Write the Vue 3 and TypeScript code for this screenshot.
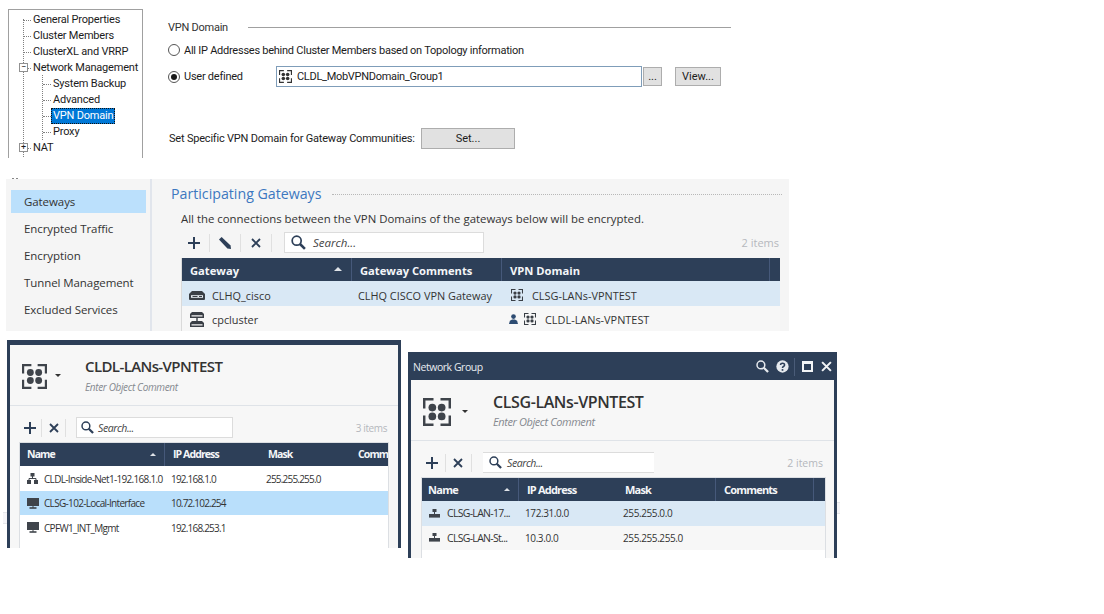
<script setup lang="ts">
interface TreeItem { label: string; level: number; selected?: boolean; expander?: string }
const tree: TreeItem[] = [
  { label: 'General Properties', level: 0 },
  { label: 'Cluster Members', level: 0 },
  { label: 'ClusterXL and VRRP', level: 0 },
  { label: 'Network Management', level: 0, expander: 'minus' },
  { label: 'System Backup', level: 1 },
  { label: 'Advanced', level: 1 },
  { label: 'VPN Domain', level: 1, selected: true },
  { label: 'Proxy', level: 1 },
  { label: 'NAT', level: 0, expander: 'plus' },
]
const nav = ['Gateways', 'Encrypted Traffic', 'Encryption', 'Tunnel Management', 'Excluded Services']

interface Row { icon: string; name: string; ip: string; mask: string; cls?: string }
interface Win {
  id: string; title: string; bar?: string; items: string; heads: string[]
  rows: Row[]
}
const windows: Win[] = [
  {
    id: 'win-a', title: 'CLDL-LANs-VPNTEST', items: '3 items', heads: ['IP Address', 'Mask', 'Comm'],
    rows: [
      { icon: 'i-net', name: 'CLDL-Inside-Net1-192.168.1.0', ip: '192.168.1.0', mask: '255.255.255.0' },
      { icon: 'i-host', name: 'CLSG-102-Local-Interface', ip: '10.72.102.254', mask: '', cls: 'sel-strong' },
      { icon: 'i-host', name: 'CPFW1_INT_Mgmt', ip: '192.168.253.1', mask: '' },
    ],
  },
  {
    id: 'win-b', title: 'CLSG-LANs-VPNTEST', bar: 'Network Group', items: '2 items', heads: ['IP Address', 'Mask', 'Comments'],
    rows: [
      { icon: 'i-lan', name: 'CLSG-LAN-17...', ip: '172.31.0.0', mask: '255.255.0.0', cls: 'sel-soft' },
      { icon: 'i-lan', name: 'CLSG-LAN-St...', ip: '10.3.0.0', mask: '255.255.255.0', cls: 'alt' },
    ],
  },
]
</script>

<template>
  <div class="page">
    <svg class="defs" width="0" height="0" aria-hidden="true">
      <symbol id="i-group" viewBox="0 0 24 24">
        <path d="M1 9V1h8M15 1h8v8M1 15v8h8M15 23h8v-8" fill="none" stroke="currentColor" stroke-width="2.2" />
        <circle cx="8" cy="8.2" r="3.3" fill="currentColor" /><circle cx="16" cy="8.2" r="3.3" fill="currentColor" />
        <circle cx="8" cy="15.8" r="3.3" fill="currentColor" /><circle cx="16" cy="15.8" r="3.3" fill="currentColor" />
      </symbol>
      <symbol id="i-plus" viewBox="0 0 12 12"><path d="M6 0v12M0 6h12" stroke="currentColor" stroke-width="2" fill="none" /></symbol>
      <symbol id="i-x" viewBox="0 0 12 12"><path d="M1.2 1.2l9.6 9.6M10.8 1.2l-9.6 9.6" stroke="currentColor" stroke-width="2.2" fill="none" /></symbol>
      <symbol id="i-pencil" viewBox="0 0 12 12"><path d="M0 2.6L2.6 0l9 8.4.4 3.6-3.6-.4z" fill="currentColor" /></symbol>
      <symbol id="i-search" viewBox="0 0 14 14">
        <circle cx="5.3" cy="5.3" r="4.2" fill="none" stroke="currentColor" stroke-width="1.6" />
        <path d="M8.4 8.4l4.6 4.6" stroke="currentColor" stroke-width="2.4" fill="none" />
      </symbol>
      <symbol id="i-router" viewBox="0 0 16 9">
        <path d="M3 0h10l3 3v5a1 1 0 0 1-1 1H1a1 1 0 0 1-1-1V3z" fill="currentColor" />
        <path d="M2 4.2h12v2.6H2z" fill="#e8eef4" />
        <path d="M3.5 5.5h5M10 5.5h3" stroke="currentColor" stroke-width="1" />
      </symbol>
      <symbol id="i-cluster" viewBox="0 0 14 15">
        <path d="M2 0h10l2 2v4H0V2z" fill="currentColor" />
        <path d="M2 9h10l2 2v4H0v-4z" fill="currentColor" />
        <path d="M7 6v3" stroke="currentColor" stroke-width="1.4" />
        <path d="M1.5 3.2h11v1.4h-11zM1.5 12.2h11v1.4h-11z" fill="#f5f5f5" />
      </symbol>
      <symbol id="i-user" viewBox="0 0 10 11">
        <circle cx="5" cy="2.8" r="2.6" fill="currentColor" /><path d="M0 11l1-3.6L3.5 6h3L9 7.4l1 3.6z" fill="currentColor" />
      </symbol>
      <symbol id="i-net" viewBox="0 0 11 11">
        <rect x="3.5" y="0" width="4" height="3.5" fill="currentColor" />
        <rect x="0" y="7" width="4" height="4" fill="currentColor" /><rect x="7" y="7" width="4" height="4" fill="currentColor" />
        <path d="M5.5 3v2.5M2 7V5.5h7V7" stroke="currentColor" fill="none" />
      </symbol>
      <symbol id="i-host" viewBox="0 0 12 11">
        <rect x="0" y="0" width="12" height="8" fill="currentColor" />
        <path d="M2.5 10h7" stroke="currentColor" stroke-width="1.6" /><path d="M6 8v2" stroke="currentColor" />
      </symbol>
      <symbol id="i-lan" viewBox="0 0 11 9">
        <rect x="3.5" y="0" width="4" height="3" fill="currentColor" />
        <path d="M5.5 3v2" stroke="currentColor" />
        <rect x="0" y="5" width="11" height="3.6" fill="currentColor" />
      </symbol>
      <symbol id="i-help" viewBox="0 0 14 14">
        <circle cx="7" cy="7" r="6.6" fill="currentColor" />
        <path d="M4.8 5.4C5 3 9.2 3 9.2 5.3c0 1.7-2.2 1.6-2.2 3.4" fill="none" stroke="#2d3f58" stroke-width="1.7" />
        <rect x="6.1" y="9.8" width="1.8" height="1.8" fill="#2d3f58" />
      </symbol>
    </svg>

    <!-- Tree pane -->
    <nav class="tree">
      <div class="tree-stem"></div>
      <div class="tree-substem"></div>
      <div v-for="item in tree" :key="item.label" class="tree-row" :class="'lvl' + item.level">
        <span v-if="item.expander" class="expander">{{ item.expander === 'plus' ? '+' : '−' }}</span>
        <span class="tree-dots"></span>
        <span class="tree-label" :class="{ selected: item.selected }">{{ item.label }}</span>
      </div>
    </nav>

    <!-- VPN domain form -->
    <section class="form">
      <div class="legend"><span class="legend-text">VPN Domain</span><i></i></div>
      <label class="radio-row first"><span class="radio"></span>All IP Addresses behind Cluster Members based on Topology information</label>
      <div class="radio-row second">
        <span class="radio on"></span><span class="user-label">User defined</span>
        <div class="field">
          <svg class="field-icon"><use href="#i-group" /></svg>
          <span>CLDL_MobVPNDomain_Group1</span>
        </div>
        <button class="btn dots">...</button>
        <button class="btn view">View...</button>
      </div>
      <div class="set-row">
        <span class="set-text">Set Specific VPN Domain for Gateway Communities:</span>
        <button class="btn set">Set...</button>
      </div>
    </section>

    <!-- Participating gateways -->
    <svg class="chev" width="7" height="3" viewBox="0 0 7 3"><path d="M1 0v2M5 0v2" stroke="#555" stroke-width="1.4" /></svg>
    <section class="gateways">
      <aside class="side">
        <div v-for="(n, i) in nav" :key="n" class="side-item" :class="{ active: i === 0 }">{{ n }}</div>
      </aside>
      <div class="gw-main">
        <div class="gw-title"><h2>Participating Gateways</h2><i></i></div>
        <p class="gw-desc">All the connections between the VPN Domains of the gateways below will be encrypted.</p>
        <div class="toolbar gw-tools">
          <svg class="tool t-first"><use href="#i-plus" /></svg><span class="sep"></span>
          <svg class="tool"><use href="#i-pencil" /></svg><span class="sep"></span>
          <svg class="tool t-x"><use href="#i-x" /></svg><span class="sep"></span>
          <div class="search gw-search"><svg class="mag"><use href="#i-search" /></svg><em>Search...</em></div>
          <span class="count">2 items</span>
        </div>
        <div class="gw-table">
          <div class="gw-row gw-head">
            <div class="cell c1">Gateway<span class="caret"></span></div>
            <div class="cell c2">Gateway Comments</div>
            <div class="cell c3">VPN Domain</div>
            <div class="cell c4"></div>
          </div>
          <div class="gw-row gw-sel">
            <div class="cell c1"><svg class="ic-router"><use href="#i-router" /></svg>CLHQ_cisco</div>
            <div class="cell c2 tight">CLHQ CISCO VPN Gateway</div>
            <div class="cell c3"><svg class="ic-group"><use href="#i-group" /></svg>CLSG-LANs-VPNTEST</div>
          </div>
          <div class="gw-row gw-plain">
            <div class="cell c1"><svg class="ic-cluster"><use href="#i-cluster" /></svg>cpcluster</div>
            <div class="cell c2"></div>
            <div class="cell c3"><svg class="ic-user"><use href="#i-user" /></svg><svg class="ic-group"><use href="#i-group" /></svg>CLDL-LANs-VPNTEST</div>
          </div>
        </div>
      </div>
    </section>

    <!-- Slivers of the window behind the pasted dialogs -->
    <span class="ghost ghost-l"></span>
    <span class="ghost ghost-r"></span>

    <!-- Object windows -->
    <section v-for="w in windows" :key="w.id" class="win" :class="w.id">
      <header v-if="w.bar" class="win-bar">
        <span>{{ w.bar }}</span>
        <div class="win-ctrls">
          <svg class="wc"><use href="#i-search" /></svg>
          <svg class="wc"><use href="#i-help" /></svg>
          <i class="wc-sep"></i>
          <span class="wc-max"></span>
          <svg class="wc-x"><use href="#i-x" /></svg>
        </div>
      </header>
      <div class="win-body">
        <div class="obj-head">
          <svg class="obj-icon"><use href="#i-group" /></svg>
          <span class="obj-caret"></span>
          <div class="obj-text">
            <h3>{{ w.title }}</h3>
            <em>Enter Object Comment</em>
          </div>
        </div>
        <div class="win-content">
          <div class="toolbar win-tools">
            <svg class="tool"><use href="#i-plus" /></svg><span class="sep"></span>
            <svg class="tool t-x"><use href="#i-x" /></svg><span class="sep"></span>
            <div class="search win-search"><svg class="mag"><use href="#i-search" /></svg><em>Search...</em></div>
            <span class="count">{{ w.items }}</span>
          </div>
          <div class="win-table">
            <div class="win-row win-head">
              <div class="wcell w1">Name<span class="caret"></span></div>
              <div v-for="h in w.heads" :key="h" class="wcell">{{ h }}</div>
            </div>
            <div v-for="r in w.rows" :key="r.name" class="win-row" :class="r.cls">
              <div class="wcell w1"><svg class="row-ic" :class="r.icon"><use :href="'#' + r.icon" /></svg><span>{{ r.name }}</span></div>
              <div class="wcell data">{{ r.ip }}</div>
              <div class="wcell data">{{ r.mask }}</div>
              <div class="wcell"></div>
            </div>
          </div>
        </div>
      </div>
    </section>
  </div>
</template>

<style>
html, body { margin: 0; background: #fff; }
</style>

<style scoped>
.page { position: relative; width: 1104px; height: 614px; overflow: hidden; background: #fff; font-family: "Roboto", "Liberation Sans", sans-serif; color: #1c1c1c; }
.defs { position: absolute; }
h2, h3, p { margin: 0; font-weight: normal; }
button { font-family: inherit; color: #1c1c1c; padding: 0; cursor: default; }

/* tree */
.tree { position: absolute; left: 8px; top: 9px; width: 133px; height: 146px; border: 1px solid #a0a0a0; border-bottom: 0; padding-top: 2px; font-size: 11px; letter-spacing: -0.2px; }
.tree-stem { position: absolute; left: 14px; top: 9px; height: 138px; border-left: 1px dotted #808080; }
.tree-substem { position: absolute; left: 33px; top: 65px; height: 65px; border-left: 1px dotted #808080; }
.tree-row { position: relative; height: 16px; display: flex; align-items: center; }
.lvl0 { padding-left: 14px; }
.lvl1 { padding-left: 34px; }
.tree-dots { width: 8px; border-top: 1px dotted #808080; flex: none; }
.tree-label { padding: 0 1px; line-height: 14px; white-space: nowrap; border: 1px solid transparent; }
.selected { background: #0078d7; color: #fff; border: 1px dotted #111; }
.expander { position: absolute; left: 10px; top: 3px; width: 7px; height: 7px; border: 1px solid #919191; background: #fff; font-size: 9px; line-height: 7px; text-align: center; letter-spacing: 0; z-index: 1; }

/* form */
.form { position: absolute; left: 168px; top: 18px; width: 570px; font-size: 11px; letter-spacing: -0.25px; }
.legend { display: flex; align-items: center; height: 18px; color: #333; }
.legend-text { width: 80px; flex: none; }
.legend i { width: 483px; border-top: 1px solid #a0a0a0; }
.radio-row { display: flex; align-items: center; }
.first { margin-top: 5px; height: 18px; }
.second { margin-top: 7px; height: 21px; }
.radio { width: 10px; height: 10px; border: 1px solid #555; border-radius: 50%; background: #fff; margin-right: 4px; flex: none; position: relative; }
.radio.on::after { content: ""; position: absolute; inset: 2px; border-radius: 50%; background: #1a1a1a; }
.user-label { width: 92px; flex: none; }
.field { width: 364px; height: 19px; border: 1px solid #7f9db9; display: flex; align-items: center; flex: none; letter-spacing: -0.3px; }
.field-icon { width: 13px; height: 13px; margin: 0 5px 0 2px; color: #333; }
.btn { background: #e1e1e1; border: 1px solid #adadad; box-sizing: border-box; font-size: 11px; }
.dots { width: 19px; height: 19px; margin-left: 1px; }
.view { width: 46px; height: 19px; margin-left: 13px; }
.set-row { margin-top: 41px; display: flex; align-items: center; height: 21px; padding-left: 1px; }
.set-text { width: 246px; flex: none; white-space: nowrap; letter-spacing: -0.2px; }
.set { width: 94px; height: 21px; margin-left: 6px; }

/* gateways */
.chev { position: absolute; left: 12px; top: 178px; }
.gateways { position: absolute; left: 6px; top: 179px; width: 783px; height: 152px; background: #f5f5f5; display: flex; font-family: "Open Sans", sans-serif; overflow: hidden; }
.side { width: 146px; flex: none; border-right: 2px solid #e1e5ec; padding: 11px 0 0 5px; box-sizing: border-box; }
.side-item { width: 122px; height: 23px; line-height: 23px; padding-left: 13px; margin-bottom: 4px; font-size: 11.5px; letter-spacing: -0.08px; color: #333; white-space: nowrap; }
.side-item.active { background: #bbe0fc; }
.gw-main { flex: 1; padding-left: 19px; min-width: 0; }
.gw-title { display: flex; align-items: center; height: 20px; margin-top: 4px; }
.gw-title h2 { font-size: 14.2px; color: #3d78c0; white-space: nowrap; }
.gw-title i { margin-left: 10px; width: 450px; border-top: 1px dotted #b8b8b8; margin-top: 2px; }
.gw-desc { font-size: 11.4px; color: #333; margin: 8px 0 0 10px; line-height: 16px; white-space: nowrap; }
.toolbar { display: flex; align-items: center; }
.tool { width: 12px; height: 12px; color: #2d3f58; flex: none; }
.sep { width: 1px; height: 18px; background: #e0e0e0; flex: none; }
.gw-tools { margin: 5px 0 0 17px; height: 21px; width: 591px; }
.gw-tools .sep { margin: 0 9px 0 9px; }
.t-x { width: 10px; height: 10px; margin: 0 1px; }
.search { background: #fff; display: flex; align-items: center; box-sizing: border-box; }
.search em { font-size: 11.5px; color: #444; }
.mag { width: 14px; height: 14px; color: #2d3f58; margin: 0 4px 0 5px; flex: none; }
.gw-search { width: 200px; height: 21px; border: 1px solid #dcdcdc; margin-left: 3px; }
.gw-search .mag { width: 15px; height: 15px; margin: 0 7px 0 6px; }
.count { margin-left: auto; color: #b5b8bd; font-size: 11px; }
.gw-table { margin: 5px 0 0 10px; width: 598px; border-left: 1px solid #dadada; }
.gw-row { display: flex; height: 25px; background: #f7f7f7; }
.gw-head { height: 23px; background: #2d3f58; color: #fff; font-weight: 700; }
.gw-sel { background: #d9e8f5; }
.gw-sel .cell { padding-top: 3px; }
.gw-plain .cell { padding-top: 1px; }
.cell { display: flex; align-items: center; font-size: 10.9px; color: #333; white-space: nowrap; box-sizing: border-box; flex: none; position: relative; }
.gw-head .cell { color: #f4f6f8; border-right: 1px solid #46597a; font-size: 11.2px; padding-top: 1px; }
.c1 { width: 170px; padding-left: 8px; }
.c2 { width: 150px; padding-left: 8px; }
.c3 { width: 268px; padding-left: 8px; }
.c4 { flex: 1; border-right: 0 !important; }
.tight { padding-left: 6px; }
.caret { position: absolute; width: 0; height: 0; border: 4px solid transparent; border-top: 0; border-bottom: 4px solid #dfe3e8; }
.c1 .caret { right: 9px; top: 9px; }
.ic-router { width: 16px; height: 9px; margin: 0 7px 0 -1px; color: #3a3f46; }
.ic-cluster { width: 14px; height: 15px; margin: 0 8px 0 0; color: #3a3f46; }
.ic-group { width: 12px; height: 12px; margin: 0 9px 0 1px; color: #3a3f46; }
.ic-user { width: 9px; height: 10px; margin: 0 5px 0 -1px; color: #2d4c72; }

/* slivers */
.ghost { position: absolute; background: #f5f5f8; border: solid #e4e6ea; border-width: 1px 0; box-sizing: border-box; }
.ghost-l { left: 3px; top: 512px; width: 4px; height: 12px; }
.ghost-r { left: 837px; top: 502px; width: 3px; height: 12px; }

/* windows */
.win { position: absolute; background: #2d3f58; padding: 0 3px; box-sizing: border-box; font-family: "Open Sans", sans-serif; overflow: hidden; }
.win-a { left: 7px; top: 340px; width: 394px; height: 208px; padding-top: 5px; }
.win-b { left: 408px; top: 352px; width: 429px; height: 206px; }
.win-bar { height: 28px; color: #e8ecf0; font-size: 10.5px; letter-spacing: -0.45px; display: flex; align-items: center; padding: 1px 2px 0; box-sizing: border-box; }
.win-ctrls { margin-left: auto; display: flex; align-items: center; color: #e6eaee; }
.wc { width: 13px; height: 13px; margin-right: 7px; }
.wc-sep { width: 1px; height: 18px; background: #4a5c78; margin: 0 7px 0 -2px; }
.wc-max { width: 7px; height: 6px; border: 2px solid #f2f4f6; border-top-width: 3px; margin-right: 8px; box-sizing: content-box; }
.wc-x { width: 11px; height: 11px; color: #f2f4f6; }
.win-body { background: #f7f7f7; height: 100%; }
.obj-head { display: flex; align-items: flex-start; border-bottom: 1px solid #dfe3e8; padding: 16px 0 0 12px; box-sizing: border-box; height: 61px; }
.obj-icon { width: 25px; height: 31px; color: #3f444b; flex: none; }
.win-b .obj-icon { width: 28px; height: 32px; }
.obj-caret { width: 0; height: 0; border: 3px solid transparent; border-top: 3px solid #333; border-bottom: 0; margin: 13px 24px 0 8px; flex: none; }
.win-b .obj-caret { margin: 14px 25px 0 11px; }
.obj-text { display: flex; flex-direction: column; margin-top: -5px; }
.win-a .obj-text { margin-top: -6px; }
.obj-text h3 { line-height: 22px; font-weight: 600; color: #333; white-space: nowrap; }
.win-a h3 { font-size: 15px; letter-spacing: -0.6px; }
.win-b h3 { font-size: 16px; letter-spacing: -0.4px; }
.obj-text em { line-height: 16px; color: #85898f; margin-top: 1px; white-space: nowrap; }
.win-a .obj-text em { font-size: 10px; letter-spacing: -0.35px; margin-top: 2px; }
.win-b .obj-text em { font-size: 11px; letter-spacing: -0.4px; }
.win-tools { height: 21px; }
.win-tools .t-x { margin: 0; }
.win-a .win-tools { margin: 11px 0 0 14px; width: 363px; }
.win-b .win-tools { margin: 11px 0 0 15px; width: 397px; }
.win-tools .sep { height: 18px; }
.win-a .sep:nth-of-type(1) { margin: 0 7px 0 5px; }
.win-b .sep:nth-of-type(1) { margin: 0 7px 0 7px; }
.win-a .sep:nth-of-type(2) { margin: 0 10px 0 6px; }
.win-b .sep:nth-of-type(2) { margin: 0 11px 0 8px; }
.win-search { height: 21px; }
.win-a .win-search { width: 157px; border: 1px solid #dcdcdc; }
.win-a .mag { width: 13px; height: 13px; margin: 0 4px 0 4px; }
.win-b .win-search { width: 171px; border-top: 1px solid #dcdcdc; border-bottom: 1px solid #dcdcdc; }
.win-b .mag { width: 13px; height: 13px; margin: 0 5px 0 6px; }
.win-search em { font-size: 10.5px; letter-spacing: -0.4px; }
.win-a .count { font-size: 10px; letter-spacing: -0.4px; }
.win-b .count { font-size: 10.5px; }
.win-table { background: #fff; height: 120px; box-shadow: 0 0 0 1px #dcdfe3; }
.win-a .win-table { margin: 5px 0 0 10px; width: 368px; overflow: hidden; }
.win-b .win-table { margin: 5px 0 0 11px; width: 403px; }
.win-row { display: grid; height: 24.5px; align-items: center; font-size: 10.5px; color: #333; letter-spacing: -0.7px; }
.win-a .win-row { grid-template-columns: 145px 95px 90px 38px; font-size: 10px; letter-spacing: -0.68px; }
.win-a .win-row:not(.win-head) .wcell { padding-top: 1px; }
.win-b .win-row { grid-template-columns: 97px 98px 99px 98px; }
.win-row.win-head { height: 23px; background: #2d3f58; color: #f4f6f8; font-weight: 700; }
.wcell { display: flex; align-items: center; height: 100%; padding-left: 8px; box-sizing: border-box; white-space: nowrap; position: relative; overflow: hidden; }
.win-head .wcell { padding-bottom: 1px; }
.win-head .wcell:first-child { border-right: 1px solid #46597a; }
.win-b .win-head .wcell:nth-child(3) { border-right: 1px solid #46597a; }
.win-b .win-head .wcell:nth-child(4) { border-right: 1px solid #46597a; }
.win-a .win-head .wcell { font-size: 10.5px; letter-spacing: -0.9px; }
.win-b .win-head .wcell { font-size: 11px; letter-spacing: -0.8px; }
.win-b .win-head .w1 { padding-left: 6px; letter-spacing: -0.7px; }
.w1 .caret { right: 8px; top: 10px; border-width: 3px; border-top: 0; border-bottom: 3px solid #dfe3e8; }
.w1 { padding-left: 7px; }
.data { padding-left: 6px; font-size: 10px; }
.win-a .data { letter-spacing: -0.8px; }
.win-b .data { letter-spacing: -0.4px; }
.row-ic { width: 11px; height: 11px; margin-right: 6px; color: #3f444b; flex: none; }
.win-b .row-ic { margin-right: 7px; }
.row-ic.i-host { width: 12px; margin-right: 5px; }
.row-ic.i-lan { height: 9px; }
.sel-strong { background: #b9dffb; }
.sel-soft { background: #d9e8f5; }
.alt { background: #f7f7f7; }
</style>
